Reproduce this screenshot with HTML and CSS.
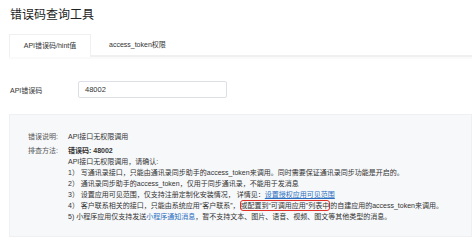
FILE: index.html
```html
<!DOCTYPE html>
<html lang="zh">
<head>
    <meta charset="UTF-8">
    <title>错误码查询工具</title>
    <link rel="stylesheet" href="styles.css">
</head>
<body>
<div class="page">
    <h1>错误码查询工具</h1>
    <div class="tabs">
        <div class="tab active">API错误码/hint值</div>
        <div class="tab">access_token权限</div>
    </div>

    <div class="field">
        <label>API错误码</label>
        <div class="input">48002</div>
    </div>

    <div class="result">
        <div class="row">
            <div class="key">错误说明:</div>
            <div class="val">API接口无权限调用</div>
        </div>
        <div class="row">
            <div class="key">排查方法:</div>
            <div class="val">
                <p><b>错误码: 48002</b></p>
                <p>API接口无权限调用，请确认:</p>
                <p>1） 写通讯录接口，只能由通讯录同步助手的access_token来调用。同时需要保证通讯录同步功能是开启的。</p>
                <p>2） 通讯录同步助手的access_token，仅用于同步通讯录，不能用于发消息</p>
                <p>3） 设置应用可见范围，仅支持注册定制化安装情况， 详情见：<a class="link">设置授权应用可见范围</a></p>
                <p>4） 客户联系相关的接口，只能由系统应用“客户联系”，<span class="mark">或配置到“可调用应用”列表中</span>的自建应用的access_token来调用。</p>
                <p>5) 小程序应用仅支持发送<span class="blue">小程序通知消息</span>，暂不支持文本、图片、语音、视频、图文等其他类型的消息。</p>
            </div>
        </div>
    </div>
</div>
</body>
</html>
```

FILE: styles.css
```css
body { margin: 0; background: #fff; color: #333; font-family: "Liberation Sans", "Noto Sans CJK SC", sans-serif; }
.page { padding: 7px 2px 0 9px; }
h1 { margin: 0 0 0 1px; font-size: 12px; font-weight: normal; line-height: 16px; color: #222; }

.tabs { display: flex; margin-top: 11px; border-bottom: 2px solid #f0f0f0; box-shadow: 0 2px 0 #fafafa; height: 21px; }
.tab { font-size: 7px; line-height: 21px; color: #333; padding: 0 18px; }
.tab.active { width: 82px; box-sizing: border-box; padding: 0; text-align: center; background: #fff; border: 1px solid #f0f0f0; border-bottom: none; height: 23px; margin-bottom: -2px; }

.field { display: flex; align-items: center; margin-top: 24px; }
.field label { width: 68px; font-size: 7px; color: #333; padding-left: 1px; }
.input { width: 141px; height: 15px; border: 1px solid #dcdfe6; border-radius: 2px; font-size: 7.5px; line-height: 15px; padding-left: 6px; color: #333; }

.result { margin-top: 16px; background: #f7f8fa; border: 1px solid #eef0f3; padding: 16px 0 14px 18px; font-size: 7px; line-height: 11px; color: #333; }
.row { display: flex; margin-bottom: 3px; }
.row:last-child { margin-bottom: 0; }
.key { width: 40px; color: #555; }
.val { flex: 1; }
.val p { margin: 0; }
.val b { font-weight: bold; }
.link { color: #2a6fc0; text-decoration: underline; }
.blue { color: #2a6fc0; }
.mark { border: 1.5px solid #e0302a; border-radius: 3px; padding: 1px 0; }
```
